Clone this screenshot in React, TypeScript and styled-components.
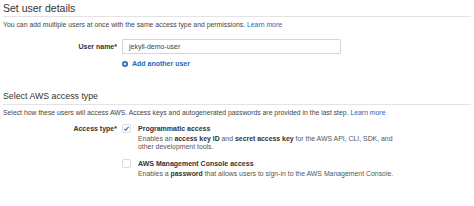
import React from "react";
import styled, { createGlobalStyle } from "styled-components";

const GlobalStyle = createGlobalStyle`
  html, body {
    margin: 0;
    padding: 0;
    background: #fff;
  }
  body {
    font-family: "Liberation Sans", Arial, Helvetica, sans-serif;
    color: #444;
  }
`;

const Page = styled.div`
  width: 474px;
  height: 206px;
  padding: 2px 3px 0 3px;
  box-sizing: border-box;
  overflow: hidden;
`;

const Section = styled.section<{ $gap?: number }>`
  margin-top: ${(p) => p.$gap ?? 0}px;
`;

const Title = styled.h2<{ $size?: number }>`
  margin: 0;
  font-size: ${(p) => p.$size ?? 10.5}px;
  font-weight: normal;
  color: #333;
  line-height: 13px;
  padding-bottom: 1px;
  border-bottom: 1px solid #e3e3e3;
`;

const Description = styled.p`
  margin: 3px 0 0 0;
  font-size: 6.85px;
  line-height: 9px;
  color: #444;
`;

const Link = styled.a`
  color: #2268b8;
  text-decoration: none;
`;

const FormRow = styled.div<{ $top?: number }>`
  display: grid;
  grid-template-columns: 114px 1fr;
  column-gap: 5px;
  margin-top: ${(p) => p.$top ?? 0}px;
  align-items: start;
`;

const Label = styled.label<{ $pad?: number }>`
  text-align: right;
  font-size: 7px;
  font-weight: bold;
  color: #333;
  padding-top: ${(p) => p.$pad ?? 0}px;
  line-height: 9px;
`;

const Input = styled.div`
  width: 219px;
  height: 15px;
  box-sizing: border-box;
  border: 1px solid #d5d5d5;
  border-radius: 1px;
  padding: 0 6px;
  font-size: 7px;
  line-height: 13px;
  color: #444;
`;

const AddLink = styled.a`
  display: flex;
  align-items: center;
  gap: 4px;
  margin-top: 5px;
  font-size: 7px;
  font-weight: bold;
  color: #2268b8;
  line-height: 9px;
`;

const Options = styled.div`
  display: flex;
  flex-direction: column;
  gap: 8px;
`;

const Option = styled.div`
  display: grid;
  grid-template-columns: 9px 1fr;
  column-gap: 7px;
`;

const Box = styled.span`
  width: 9px;
  height: 9px;
  box-sizing: border-box;
  border: 1px solid #dcdcdc;
  border-radius: 2px;
  background: #fff;
  display: flex;
  align-items: center;
  justify-content: center;
`;

const OptionTitle = styled.div`
  font-size: 7px;
  font-weight: bold;
  color: #333;
  line-height: 9px;
`;

const OptionText = styled.div`
  font-size: 6.9px;
  line-height: 8.2px;
  color: #555;
  margin-top: 2px;
  width: 262px;

  b {
    display: inline-block;
    line-height: 8.2px;
    color: #333;
  }
`;

const PlusIcon = () => (
  <svg width="6" height="6" viewBox="0 0 12 12">
    <circle cx="6" cy="6" r="6" fill="#2268b8" />
    <path d="M6 3v6M3 6h6" stroke="#fff" strokeWidth="2" />
  </svg>
);

const CheckIcon = () => (
  <svg width="7" height="7" viewBox="0 0 10 10">
    <path d="M2 5.5l2 2L8 2.5" fill="none" stroke="#1f5fb0" strokeWidth="1.6" />
  </svg>
);

export default function App() {
  return (
    <>
      <GlobalStyle />
      <Page>
        <Section>
          <Title>Set user details</Title>
          <Description>
            You can add multiple users at once with the same access type and
            permissions. <Link>Learn more</Link>
          </Description>
          <FormRow $top={10}>
            <Label $pad={3}>User name*</Label>
            <div>
              <Input>jekyll-demo-user</Input>
              <AddLink>
                <PlusIcon />
                Add another user
              </AddLink>
            </div>
          </FormRow>
        </Section>
        <Section $gap={22}>
          <Title $size={8.8}>Select AWS access type</Title>
          <Description>
            Select how these users will access AWS. Access keys and
            autogenerated passwords are provided in the last step.{" "}
            <Link>Learn more</Link>
          </Description>
          <FormRow $top={7}>
            <Label>Access type*</Label>
            <Options>
              <Option>
                <Box>
                  <CheckIcon />
                </Box>
                <div>
                  <OptionTitle>Programmatic access</OptionTitle>
                  <OptionText>
                    Enables an <b>access key ID</b> and{" "}
                    <b>secret access key</b> for the AWS API, CLI, SDK, and
                    other development tools.
                  </OptionText>
                </div>
              </Option>
              <Option>
                <Box />
                <div>
                  <OptionTitle>AWS Management Console access</OptionTitle>
                  <OptionText>
                    Enables a <b>password</b> that allows users to sign-in to
                    the AWS Management Console.
                  </OptionText>
                </div>
              </Option>
            </Options>
          </FormRow>
        </Section>
      </Page>
    </>
  );
}
